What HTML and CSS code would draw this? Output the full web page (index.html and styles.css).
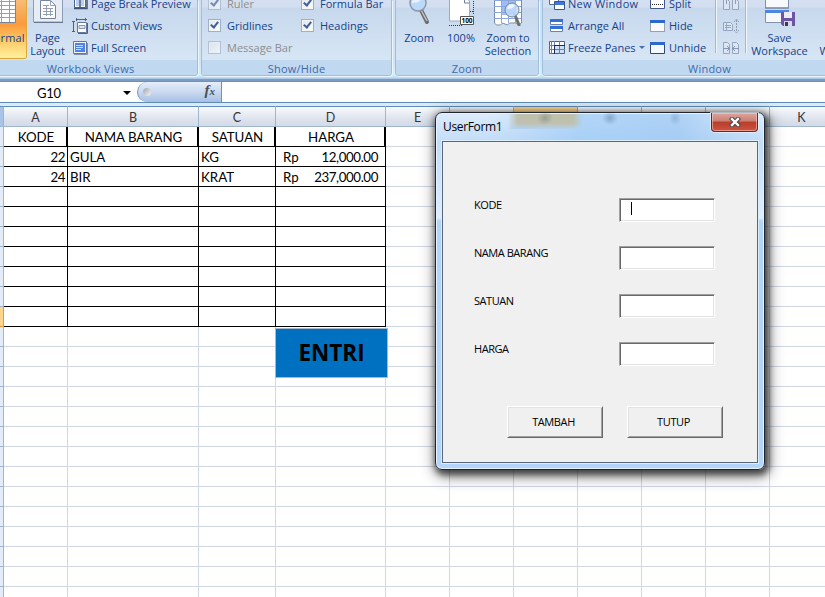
FILE: index.html
```html
<!DOCTYPE html>
<html lang="en">
<head>
    <meta charset="UTF-8">
    <meta name="viewport" content="width=device-width, initial-scale=1.0">
    <title>UserForm1</title>
    <link rel="stylesheet" href="styles.css">
</head>
<body>
    <div class="ribbon">
        <div class="group views">
            <div class="tools">
                <div class="big normal">
                    <svg width="40" height="31" viewBox="0 0 40 31">
                        <path d="M0 0h34.500v30.500H0z" fill="#fff" stroke="#76859c"/>
                        <path d="M0 5.500h34M0 9.500h34M0 13.500h34M0 17.500h34M0 21.500h34M0 25.500h34M28.500 0v30M20.500 0v30M12.500 0v30" stroke="#8fa0bd"/>
                    </svg>
                    <span>Normal</span>
                </div>
                <div class="big layout">
                    <svg width="32" height="31" viewBox="0 0 32 31">
                        <path d="M1.500 -1h29v28h-29z" fill="#e8edf5" stroke="#8d9db5"/>
                        <path d="M2 27.500h29" stroke="#68778d"/>
                        <path d="M8.500 5.500h10l5 5v13h-15z" fill="#fff" stroke="#77869e"/>
                        <path d="M18.500 5.500v5h5M11 10.500h6M11 13.500h10M11 16.500h10M11 19.500h10M14.500 10v11M18.500 13v8" fill="none" stroke="#93a0b2"/>
                    </svg>
                    <span>Page<br>Layout</span>
                </div>
                <div class="list">
                    <div class="item">
                        <svg width="16" height="16" viewBox="0 0 16 16"><path d="M2.500 1.500h11v10h-11z" fill="#fff" stroke="#49648f"/><path d="M4 3h3v7H4zM9 3h3v7H9z" fill="#b9cdf0"/><path d="M8 1v11M2 12.500h13V3" fill="none" stroke="#3f547b" stroke-width="1.500"/></svg>
                        <span>Page Break Preview</span>
                    </div>
                    <div class="item">
                        <svg width="16" height="16" viewBox="0 0 16 16"><path d="M0 3.500h3M0 13.500h3M1.500 4v9M4 1.500h11M4.500 0v3M13.500 0v3" stroke="#49648f"/><path d="M5.500 4.500h9v10h-9z" fill="#fff" stroke="#65789a"/><path d="M7 7.500h6v3H7z" fill="#dce4f3" stroke="#8796b4"/><path d="M15.500 5v10.500H6" fill="none" stroke="#536580"/></svg>
                        <span>Custom Views</span>
                    </div>
                    <div class="item">
                        <svg width="16" height="16" viewBox="0 0 16 16"><path d="M1.500 1.500h13v12h-13z" fill="#eef3fb" stroke="#65789a"/><path d="M3 3h10v9H3z" fill="#4f83e8"/><path d="M4 5.500h7M4 7.500h7M4 9.500h5" stroke="#c8dcff"/><path d="M2 14.500h13.500V3" fill="none" stroke="#8190a6"/></svg>
                        <span>Full Screen</span>
                    </div>
                </div>
            </div>
            <div class="caption">Workbook Views</div>
        </div>

        <div class="group show">
            <div class="tools">
                <div class="list">
                    <div class="item off"><i class="check on"></i><span>Ruler</span></div>
                    <div class="item"><i class="check on"></i><span>Gridlines</span></div>
                    <div class="item off"><i class="check"></i><span>Message Bar</span></div>
                </div>
                <div class="list">
                    <div class="item"><i class="check on"></i><span>Formula Bar</span></div>
                    <div class="item"><i class="check on"></i><span>Headings</span></div>
                </div>
            </div>
            <div class="caption">Show/Hide</div>
        </div>

        <div class="group zoom">
            <div class="tools">
                <div class="big zoom-one">
                    <svg width="32" height="31" viewBox="0 0 32 31"><path d="M18 15l6 12" stroke="#6c6c70" stroke-width="4" stroke-linecap="round"/><path d="M18 15l6 11" stroke="#c1c1c4" stroke-width="1.500"/><circle cx="15" cy="8" r="8" fill="#bcd9f8" stroke="#8b96a8" stroke-width="1.500"/><path d="M9 8a6 6 0 0 1 10-5c-2 4-5 5-10 5z" fill="#e6f2ff"/></svg>
                    <span>Zoom</span>
                </div>
                <div class="big hundred">
                    <svg width="32" height="31" viewBox="0 0 32 31"><path d="M4.500 -1h13l7 7v20h-20z" fill="#fff" stroke="#9aabc4"/><path d="M19.500 0v8h5" fill="none" stroke="#6c7f9c"/><path d="M4 30.500h13M28.500 4v16M25 16.500h3" fill="none" stroke="#303947" stroke-dasharray="1 1"/><path d="M15.500 21.500h13v8h-13z" fill="#fff" stroke="#555"/><text x="16.500" y="28.200" font-size="6.500" font-weight="bold" textLength="11">100</text></svg>
                    <span>100%</span>
                </div>
                <div class="big selection">
                    <svg width="32" height="31" viewBox="0 0 32 31"><path d="M2.500 -1h27v29l-3 2-2-2h-7l-2 2-5-2-2 2h-4l-2-2z" fill="#fff" stroke="#7c8ca8"/><path d="M9 6h14v14H9z" fill="#9dbdf4"/><path d="M2 5.500h27M2 11.500h27M2 17.500h27M2 23.500h27M9.500 0v28M16.500 0v28M23.500 0v28" stroke="#8ba7dc"/><path d="M23 20l4 10" stroke="#706e6c" stroke-width="3" stroke-linecap="round"/><circle cx="20" cy="15" r="7" fill="#c0dafa" fill-opacity=".85" stroke="#77879f"/><path d="M15 14a5 5 0 0 1 8-4c-1 3-4 4-8 4z" fill="#ebf4ff"/></svg>
                    <span>Zoom to<br>Selection</span>
                </div>
            </div>
            <div class="caption">Zoom</div>
        </div>

        <div class="group window">
            <div class="tools">
                <div class="list">
                    <div class="item">
                        <svg width="16" height="16" viewBox="0 0 16 16"><path d="M.5 1.500h9v7h-9z" fill="#fff" stroke="#566b90"/><path d="M5.500 5.500h10v8h-10z" fill="#fff" stroke="#39568b"/><path d="M6 6h9v3H6z" fill="#3c78df"/></svg>
                        <span class="wide">New Window</span>
                    </div>
                    <div class="item">
                        <svg width="16" height="16" viewBox="0 0 16 16"><path d="M1.500 1.500h12v5h-12zM1.500 8.500h12v5h-12z" fill="#fff" stroke="#6d83aa"/><path d="M1 1h13v3H1zM1 8h13v3H1z" fill="#336fd8"/></svg>
                        <span>Arrange All</span>
                    </div>
                    <div class="item">
                        <svg width="16" height="16" viewBox="0 0 16 16"><path d="M.5 1.500h15v12H.5z" fill="#fff" stroke="#4e6282"/><path d="M6 6h9v7H6z" fill="#cddff9"/><path d="M0 5.500h16M5.500 1v13M10.500 1v13M0 9.500h16M2.500 1v13" stroke="#6680aa"/><path d="M5 5.500h11M5.500 5v9" stroke="#182f5c"/></svg>
                        <span>Freeze Panes</span><b class="drop"></b>
                    </div>
                </div>
                <div class="list second">
                    <div class="item">
                        <svg width="16" height="16" viewBox="0 0 16 16"><path d="M.5 1.500h14v11H.5z" fill="#fff" stroke="#41598a"/><path d="M0 1h15v3H0z" fill="#2d68cf"/><path d="M2 8.500h11" stroke="#222" stroke-dasharray="1 1"/></svg>
                        <span>Split</span>
                    </div>
                    <div class="item">
                        <svg width="16" height="16" viewBox="0 0 16 16"><path d="M.5 2.500h14v11H.5z" fill="#f8fafe" stroke="#555" stroke-dasharray="1 1"/><path d="M0 2h15v3H0z" fill="#2d68cf"/></svg>
                        <span>Hide</span>
                    </div>
                    <div class="item">
                        <svg width="16" height="16" viewBox="0 0 16 16"><path d="M.5 2.500h14v11H.5z" fill="#f4f8ff" stroke="#34466a"/><path d="M0 2h15v3H0z" fill="#2d68cf"/></svg>
                        <span>Unhide</span>
                    </div>
                </div>
                <div class="list side">
                    <div class="item"><svg width="16" height="16" viewBox="0 0 16 16"><path d="M.5 3.500h4l2 2v8h-6zM9.500 3.500h4l2 2v8h-6z" fill="#dce5f1" stroke="#94a5bf"/><path d="M3.500 0v8M12.500 0v8" stroke="#8b9cb6"/></svg></div>
                    <div class="item"><svg width="16" height="16" viewBox="0 0 16 16"><path d="M.5 4.500h7l2 2v6h-9zM2 7.500h6M2 9.500h6M3.500 5v7" fill="#dce5f1" stroke="#94a5bf"/><path d="M13.500 2v12M11 4l2.500-3L16 4M11 12l2.500 3 2.500-3" fill="none" stroke="#8b9cb6" stroke-dasharray="2 1"/></svg></div>
                    <div class="item"><svg width="16" height="16" viewBox="0 0 16 16"><path d="M.5 2.500h4l2 2v9h-6zM9.500 2.500h4l2 2v9h-6z" fill="#dce5f1" stroke="#94a5bf"/><path d="M0 8.500h6M4 6l2.500 2.500L4 11M16 8.500h-6M12 6L9.500 8.500 12 11" fill="none" stroke="#8496b1"/></svg></div>
                </div>
                <div class="big save">
                    <svg width="32" height="31" viewBox="0 0 32 31"><path d="M1.500 -1h23v14h-23zM1.500 15.500h23v12h-23z" fill="#f6f8fc" stroke="#8292ae"/><path d="M1 13h24" stroke="#6d7e99"/><path d="M1 15h24v3H1z" fill="#4c86e2"/><path d="M17 17h14v14H19l-2-2z" fill="#6d55a5"/><path d="M20 17h8v6h-8z" fill="#eceaf5"/><path d="M20 26h8v5h-8z" fill="#d9d7df"/><path d="M21 27h3v4h-3z" fill="#403761"/></svg>
                    <span>Save<br>Workspace</span>
                </div>
                <div class="big switch">
                    <svg width="32" height="31" viewBox="0 0 32 31"></svg>
                    <span><br>Windows</span>
                </div>
            </div>
            <div class="caption">Window</div>
        </div>
    </div>

    <div class="formula-bar">
        <div class="name-box"><span>G10</span><b></b></div>
        <div class="fx"><i></i><em>f<small>x</small></em></div>
        <div class="formula"></div>
    </div>

    <div class="sheet">
        <div class="sheet-grid" id="sheet-grid"></div>
        <button class="entri">ENTRI</button>
    </div>

    <div class="userform">
        <div class="title-bar">
            <span>UserForm1</span>
            <button class="close">
                <svg width="12" height="10" viewBox="0 0 12 10"><path d="M3 2l6 6M9 2l-6 6" stroke="#4d4149" stroke-width="4.400" stroke-linecap="square"/><path d="M3 2l6 6M9 2l-6 6" stroke="#fff" stroke-width="2.400" stroke-linecap="square"/></svg>
            </button>
        </div>
        <div class="client">
            <div class="field"><label>KODE</label><div class="box"><i class="caret"></i></div></div>
            <div class="field"><label>NAMA BARANG</label><div class="box"></div></div>
            <div class="field"><label>SATUAN</label><div class="box"></div></div>
            <div class="field"><label>HARGA</label><div class="box"></div></div>
            <div class="buttons">
                <button>TAMBAH</button>
                <button>TUTUP</button>
            </div>
        </div>
    </div>

    <script>
        // F-J have no letter here, the form lies over them
        const columns = ['A', 'B', 'C', 'D', 'E', '', '', '', '', '', 'K'];
        const data = [
            ['KODE', 'NAMA BARANG', 'SATUAN', 'HARGA'],
            ['22', 'GULA', 'KG', '12,000.00'],
            ['24', 'BIR', 'KRAT', '237,000.00']
        ];
        const activeRow = 10;
        const activeCol = 6;
        const tableRows = 10;

        // Column headers
        let html = '<div class="row-head corner"></div>';
        columns.forEach((name, col) => {
            html += `<div class="col-head${col === activeCol ? ' active' : ''}">${name}</div>`;
        });

        // Cells, the first ten rows of A-D have a black border
        for (let row = 1; row <= 24; row++) {
            html += `<div class="row-head${row === activeRow ? ' active' : ''}"></div>`;
            columns.forEach((name, col) => {
                let value = (data[row - 1] || [])[col] || '';
                let cls = 'cell';
                if (row <= tableRows && col < 4) cls += ' bordered';
                if (row === 1 && col < 4) cls += ' heading';
                if (row > 1 && col === 0) cls += ' number';
                if (row > 1 && col === 3 && value) {
                    cls += ' money';
                    value = `<span>Rp</span><span>${value}</span>`;
                }
                html += `<div class="${cls}">${value}</div>`;
            });
        }
        document.getElementById('sheet-grid').innerHTML = html;
    </script>
</body>
</html>
```
FILE: styles.css
```css
html, body {
    margin: 0;
    height: 100%;
    overflow: hidden;
    background: #fff;
    font-family: "Open Sans", sans-serif;
}
body {
    position: relative;
}
button {
    font-family: inherit;
    padding: 0;
}

/* Ribbon */
.ribbon {
    display: flex;
    gap: 3px;
    height: 81px;
    box-sizing: border-box;
    overflow: hidden;
    border-bottom: 2px solid #7c9cc4;
    background: linear-gradient(#cfdff2 0, #d3e3f5 60px, #d8ecfa 75px, #c5e2f7 77px, #a5c2e2 79px);
    color: #15428b;
    font-size: 11px;
}
.group {
    flex: none;
    display: flex;
    flex-direction: column;
    height: 76px;
    box-sizing: border-box;
    border: 1px solid #9ebfdb;
    border-top: none;
    border-radius: 0 0 4px 4px;
    box-shadow: 1px 1px 0 #eaf5fd;
    background: linear-gradient(#d4e0f0 0, #d3dff0 7px, #c7d8ed 8px, #d7e6f5 60px);
}
.tools {
    display: flex;
    height: 60px;
}
.caption {
    height: 15px;
    background: #c1d8f1;
    color: #3e6aaa;
    text-align: center;
    line-height: 17px;
    border-radius: 0 0 3px 3px;
    letter-spacing: 0.2px;
}
.views { width: 228px; margin-left: -30px; }
.views .caption { padding-left: 13px; }
.show { width: 191px; }
.zoom { width: 144px; }
.window { width: 335px; }

.list {
    margin-top: -8px;
}
.item {
    display: flex;
    align-items: center;
    height: 22px;
    white-space: nowrap;
}
.item svg {
    position: relative;
    top: 1px;
    margin-right: 3px;
}
.item.off {
    color: #8d8d8d;
}
.item .wide { letter-spacing: 0.3px; }
.big {
    display: flex;
    flex-direction: column;
    align-items: center;
    text-align: center;
    line-height: 13px;
    white-space: nowrap;
}
.big svg {
    display: block;
    flex: none;
    height: 31px;
    margin-top: -5px;
    margin-bottom: 5px;
}
.normal {
    width: 50px;
    height: 58px;
    margin-left: 5px;
    border-right: 1px solid #e2a73b;
    border-bottom: 1px solid #d9a336;
    border-radius: 0 0 3px 3px;
    background: linear-gradient(#f7bd78 0, #fb9a3c 24px, #fdc25f 38px, #fff19c 58px);
}
.normal svg { margin-top: -8px; margin-bottom: 8px; }
.normal span { padding-left: 8px; letter-spacing: 0.2px; }
.layout { width: 41px; }
.views .list { margin-left: 4px; }
.views .item { letter-spacing: -0.05px; }

.check {
    width: 11px;
    height: 11px;
    margin-right: 6px;
    border: 1px solid #9fb0c5;
    background: linear-gradient(135deg, #dfe3e8, #fff);
    box-shadow: inset 0 0 0 1px #f4f4f4;
}
.check.on::after {
    content: "";
    display: block;
    width: 3px;
    height: 6px;
    margin: 0 0 0 3px;
    border: solid #3f5f99;
    border-width: 0 2px 2px 0;
    transform: rotate(38deg);
}
.off .check { opacity: 0.65; }
.show .list:first-child { width: 93px; margin-left: 6px; }

.zoom-one { width: 46px; }
.hundred { width: 38px; }
.selection { width: 56px; }

.window .list { margin-left: 6px; width: 101px; }
.window .second { margin-left: 0; width: 64px; }
.drop {
    margin-left: 3px;
    border: 3px solid transparent;
    border-top-color: #4b6fa8;
    border-bottom: none;
}
.window .side {
    width: 22px;
    height: 61px;
    padding: 0 0 0 7px;
    margin-left: 1px;
    border-left: 1px solid #9eb8d7;
    border-right: 1px solid #9eb8d7;
    box-shadow: inset 1px 0 #eff6fd, 1px 0 #eff6fd;
}
.save { width: 67px; }
.switch { width: 60px; }

/* Formula bar */
.formula-bar {
    display: flex;
    height: 20px;
    border-top: 1px solid #6593c5;
    border-bottom: 1px solid #5f8cb8;
    background: #fff;
}
.name-box {
    width: 137px;
    display: flex;
    align-items: center;
    font: 13px Lato, sans-serif;
}
.name-box span { width: 87px; padding: 2px 0 0 37px; box-sizing: border-box; letter-spacing: -0.3px; }
.name-box b {
    margin: 2px 0 0 36px;
    border: 4px solid transparent;
    border-top-color: #000;
    border-bottom: none;
}
.fx {
    width: 85px;
    box-sizing: border-box;
    display: flex;
    align-items: center;
    justify-content: space-between;
    padding: 0 6px 0 5px;
    border-left: 1px solid #6d91bf;
    border-right: 1px solid #6d91bf;
    border-radius: 10px 0 0 10px;
    background: linear-gradient(#e6eefa, #c9d9ef 50%, #a5c0e5);
}
.fx i {
    width: 8px;
    height: 8px;
    border-radius: 50%;
    background: linear-gradient(135deg, #a1a6ae, #f3f5f8);
}
.fx em {
    font: italic bold 15px/15px "Liberation Serif", serif;
    color: #4a4f58;
    padding-bottom: 2px;
}
.fx small { font-size: 11px; }

/* Sheet */
.sheet {
    position: relative;
    padding-top: 3px;
    background: #dceaf8;
}
.sheet-grid {
    display: grid;
    grid-template-columns: 4px 64px 131px 77px 110px repeat(7, 64px);
    grid-template-rows: 21px;
    grid-auto-rows: 20px;
    font: 13.3px Lato, sans-serif;
    color: #000;
}
.col-head {
    box-sizing: border-box;
    border-top: 1px solid #5f8cb8;
    border-right: 1px solid #9eb6ce;
    border-bottom: 1px solid #9eb6ce;
    background: linear-gradient(#f8fafc, #dfe4ee 60%, #d3dae6);
    color: #363636;
    text-align: center;
    line-height: 21px;
    font-size: 12.5px;
}
.col-head.active {
    background: #ffd58d;
    border-right-color: #f29536;
}
.row-head {
    box-sizing: border-box;
    background: #e4ecf7;
    border-right: 1px solid #9eb6ce;
    border-bottom: 1px solid #9eb6ce;
}
.row-head.corner {
    background: #a9c4e9;
    border-top: 1px solid #5f8cb8;
}
.row-head.active {
    background: #ffd58d;
    border-color: #f29536;
}
.cell {
    box-sizing: border-box;
    padding: 0 2px;
    background: #fff;
    border-right: 1px solid #d0d7e5;
    border-bottom: 1px solid #d0d7e5;
    line-height: 21px;
    white-space: nowrap;
}
.cell.bordered { border-color: #000; }
.cell.heading {
    text-align: center;
    border-right-width: 2px;
    padding-left: 4px;
    letter-spacing: -0.05px;
}
.cell.number {
    text-align: right;
    letter-spacing: -0.4px;
}
.cell.money {
    display: flex;
    justify-content: space-between;
    padding: 0 7px;
}
.cell.money span + span { letter-spacing: -0.4px; }
.entri {
    position: absolute;
    left: 275px;
    top: 225px;
    width: 113px;
    height: 50px;
    padding-bottom: 2px;
    border: 1px solid #a8b9cc;
    background: #0070c0;
    color: #000;
    font: bold 22.5px "Open Sans", sans-serif;
}

/* User form */
.userform {
    position: absolute;
    left: 435px;
    top: 112px;
    width: 330px;
    height: 358px;
    box-sizing: border-box;
    padding: 0 6px 6px;
    border: 1px solid #20262e;
    border-radius: 7px;
    box-shadow: inset 0 0 0 1px #e4f3ff, 2px 3px 6px 2px rgba(0,0,0,0.6), 2px 4px 15px 3px rgba(0,0,0,0.4);
    background: linear-gradient(#dcebfc 0, #c2dcf8 30px, #deedff 105px, #b2d4f7 108px, #b4d5f8 100%);
}
/* glass, with the column headers showing through */
.title-bar {
    display: flex;
    justify-content: space-between;
    height: 28px;
    margin: 0 -4px;
    padding: 0 4px;
    background:
        radial-gradient(8px 7px at 107px 5px, rgba(90,100,100,0.35), transparent) no-repeat,
        radial-gradient(8px 7px at 172px 5px, rgba(70,100,140,0.4), transparent) no-repeat,
        radial-gradient(6px 7px at 237px 5px, rgba(70,100,140,0.25), transparent) no-repeat,
        linear-gradient(rgba(0,0,0,0), rgba(178,212,247,0.9)) 74px 10px / 70px 6px no-repeat,
        linear-gradient(90deg, transparent 70px, #bfc0ad 80px, #bfc0ad 135px, transparent 145px) 0 1px / 100% 15px no-repeat,
        linear-gradient(90deg, transparent 50px, rgba(150,200,245,0.6) 140px, rgba(140,190,240,0.55) 240px, transparent 100%) 0 1px / 100% 27px no-repeat;
}
.title-bar span {
    padding-left: 1px;
    font-size: 12px;
    line-height: 28px;
    letter-spacing: -0.35px;
}
.close {
    display: flex;
    align-items: center;
    justify-content: center;
    width: 47px;
    height: 19px;
    border: 1px solid #5b2a2a;
    border-top: none;
    border-radius: 0 0 4px 4px;
    box-shadow: inset 0 0 0 1px rgba(255,210,200,0.55), 0 0 0 1px rgba(235,245,255,0.7);
    background: linear-gradient(#dfa49a, #c98074 45%, #b83d2b 50%, #ce5441 100%);
}
.client {
    height: 322px;
    box-sizing: border-box;
    border: 1px solid #58677a;
    box-shadow: 0 0 0 1px #dcedfc;
    background: #f0f0f0;
    padding: 56px 0 0 31px;
    font-size: 11px;
}
.field {
    display: flex;
    height: 48px;
}
.field label {
    width: 145px;
    line-height: 13px;
    letter-spacing: -0.45px;
}
.box {
    width: 96px;
    height: 24px;
    box-sizing: border-box;
    border: 1px solid #a0a0a0;
    border-right-color: #fff;
    border-bottom-color: #fff;
    box-shadow: inset 1px 1px #696969, inset -1px -1px #e3e3e3;
    background: #fff;
}
.caret {
    display: block;
    width: 1px;
    height: 13px;
    margin: 3px 0 0 11px;
    background: #000;
}
.buttons {
    display: flex;
    gap: 24px;
    padding: 16px 0 0 33px;
}
.buttons button {
    width: 96px;
    height: 32px;
    padding: 0 3px 2px 0;
    border: 1px solid #fff;
    border-right-color: #696969;
    border-bottom-color: #696969;
    box-shadow: inset 1px 1px #e3e3e3, inset -1px -1px #a0a0a0;
    background: #f0f0f0;
    color: #000;
    font-size: 11px;
    letter-spacing: -0.4px;
}
```
